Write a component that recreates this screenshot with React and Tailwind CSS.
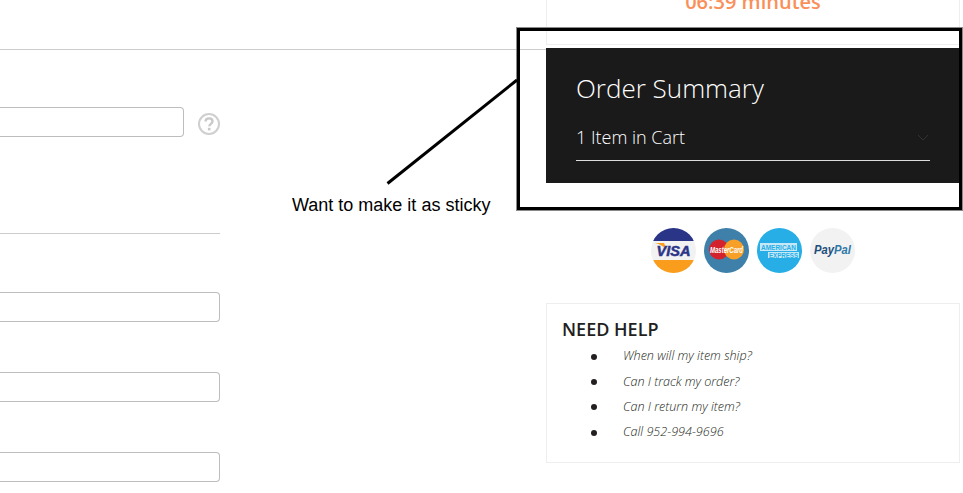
import React from 'react';

const openSans = "font-['Open_Sans',sans-serif]";

const helpLinks = [
  'When will my item ship?',
  'Can I track my order?',
  'Can I return my item?',
  'Call 952-994-9696',
];

const FormInput = ({ className = '' }) => (
  <div className={`h-[30px] rounded-[4px] rounded-l-none border border-l-0 border-[#bdbdbd] bg-white ${className}`}></div>
);

const HelpIcon = () => (
  <svg width="22" height="22" viewBox="0 0 22 22" className="ml-[14px] mt-[4px]">
    <circle cx="11" cy="11" r="10" fill="#fff" stroke="#cfcfcf" strokeWidth="2" />
    <path d="M7.6 8.6c0-2 1.5-3.2 3.5-3.2s3.4 1.1 3.4 2.9c0 2.500-3.200 2.600-3.200 5" fill="none" stroke="#c9c9c9" strokeWidth="2.400" />
    <rect x="9.900" y="14.800" width="2.600" height="2.600" fill="#c9c9c9" />
  </svg>
);

const VisaBadge = () => (
  <svg width="45" height="45" viewBox="0 0 45 45">
    <defs>
      <clipPath id="visa-clip"><circle cx="22.500" cy="22.500" r="22.500" /></clipPath>
    </defs>
    <g clipPath="url(#visa-clip)">
      <rect width="45" height="45" fill="#f3f2f3" />
      <rect width="45" height="13" fill="#2a3587" />
      <rect y="32" width="45" height="13" fill="#fa9d1c" />
      <path d="M4 15h9l3 7c-3-3-7-6-12-7z" fill="#fa9d1c" />
    </g>
    <text x="22.500" y="27.500" textAnchor="middle" fontFamily="'Liberation Sans',sans-serif" fontSize="14" fontWeight="700" fontStyle="italic" fill="#2a3587" stroke="#2a3587" strokeWidth="0.500" textLength="34" lengthAdjust="spacingAndGlyphs">VISA</text>
  </svg>
);

const MastercardBadge = () => (
  <svg width="45" height="45" viewBox="0 0 45 45">
    <circle cx="22.500" cy="22.500" r="22.500" fill="#3e80a9" />
    <circle cx="15" cy="21.500" r="10" fill="#d3222d" />
    <circle cx="30" cy="21.500" r="10" fill="#f79f27" />
    <text x="22.500" y="25" textAnchor="middle" fontFamily="'Liberation Sans',sans-serif" fontSize="9" fontWeight="700" fontStyle="italic" fill="#fff" textLength="33" lengthAdjust="spacingAndGlyphs">MasterCard</text>
  </svg>
);

const AmexBadge = () => (
  <svg width="45" height="45" viewBox="0 0 45 45">
    <circle cx="22.500" cy="22.500" r="22.500" fill="#27aee6" />
    <rect x="3" y="15" width="37" height="8" fill="#c5e8f8" />
    <rect x="11" y="24" width="31" height="6" fill="#c5e8f8" />
    <text x="21.500" y="22" textAnchor="middle" fontFamily="'Liberation Sans',sans-serif" fontSize="8" fontWeight="700" fill="#27aee6" textLength="35" lengthAdjust="spacingAndGlyphs">AMERICAN</text>
    <text x="26.500" y="29.500" textAnchor="middle" fontFamily="'Liberation Sans',sans-serif" fontSize="7" fontWeight="700" fill="#27aee6" textLength="29" lengthAdjust="spacingAndGlyphs">EXPRESS</text>
  </svg>
);

const PaypalBadge = () => (
  <svg width="45" height="45" viewBox="0 0 45 45">
    <circle cx="22.500" cy="22.500" r="22.500" fill="#f3f2f3" />
    <text x="22.500" y="26" textAnchor="middle" fontFamily="'Liberation Sans',sans-serif" fontSize="12" fontWeight="700" fontStyle="italic" textLength="37" lengthAdjust="spacingAndGlyphs">
      <tspan fill="#1c4f7c">Pay</tspan>
      <tspan fill="#2f78a8">Pal</tspan>
    </text>
  </svg>
);

export default function App() {
  return (
    <div className={`relative flex h-[493px] w-[963px] overflow-hidden bg-white ${openSans}`}>
      {/* Checkout form */}
      <div className="w-[546px] shrink-0">
        <div className="mt-[49px] h-px bg-[#cccccc]"></div>
        <div className="mt-[57px] flex items-center">
          <FormInput className="w-[184px]" />
          <HelpIcon />
        </div>
        <div className="mt-[96px] h-px w-[220px] bg-[#cccccc]"></div>
        <div className="mt-[58px] flex w-[220px] flex-col gap-[50px]">
          <FormInput />
          <FormInput />
          <FormInput />
        </div>
      </div>

      {/* Sidebar */}
      <div className="w-[414px] shrink-0">
        <div className="flex h-[45px] items-end justify-center border border-t-0 border-[#eeeeee] pb-[30px]">
          <span className="text-[20px] font-semibold leading-[24px] text-[#f9905a]">06:39 minutes</span>
        </div>

        <div className="mt-[3px] h-[135px] bg-[#1a1a1a] pl-[30px] pr-[30px] pt-[23px] text-white">
          <h2 className="text-[26px] font-light leading-[34px]">Order Summary</h2>
          <div className="mt-[19px] flex h-[37px] items-start justify-between border-b border-[#dddddd] pt-[1px]">
            <span className="text-[18px] font-light leading-[24px]">1 Item in Cart</span>
            <svg width="12" height="8" viewBox="0 0 12 8" className="mr-px mt-[9px]">
              <path d="M1 1l5 5 5-5" fill="none" stroke="#333333" strokeWidth="1" />
            </svg>
          </div>
        </div>

        <div className="mt-[45px] flex justify-center gap-[8px] pr-[1px]">
          <VisaBadge />
          <MastercardBadge />
          <AmexBadge />
          <PaypalBadge />
        </div>

        <div className="mt-[30px] h-[160px] border border-[#eeeeee] pl-[15px] pt-[13px]">
          <h3 className="text-[18px] font-semibold leading-[24px] text-[#231f20]">NEED HELP</h3>
          <ul className="mt-[3px]">
            {helpLinks.map((link) => (
              <li key={link} className="flex h-[25.300px] items-center">
                <span className="ml-[29px] h-[6px] w-[6px] rounded-full bg-[#231f20]"></span>
                <span className="ml-[26px] text-[12.600px] font-light italic text-[#231f20]">{link}</span>
              </li>
            ))}
          </ul>
        </div>
      </div>

      {/* Annotation drawn over the page */}
      <div className="absolute left-[517px] top-[28px] h-[182px] w-[445px] border-[3px] border-black shadow-[0_0_0_1px_#8a8a8a]"></div>
      <svg width="140" height="115" viewBox="0 0 140 115" className="absolute left-[380px] top-[75px]">
        <line x1="7.500" y1="108.500" x2="137" y2="5" stroke="#000" strokeWidth="3" />
      </svg>
      <span className="absolute left-[292px] top-[195px] font-['Liberation_Sans',sans-serif] text-[18px] leading-[20px] text-black">Want to make it as sticky</span>
    </div>
  );
}
